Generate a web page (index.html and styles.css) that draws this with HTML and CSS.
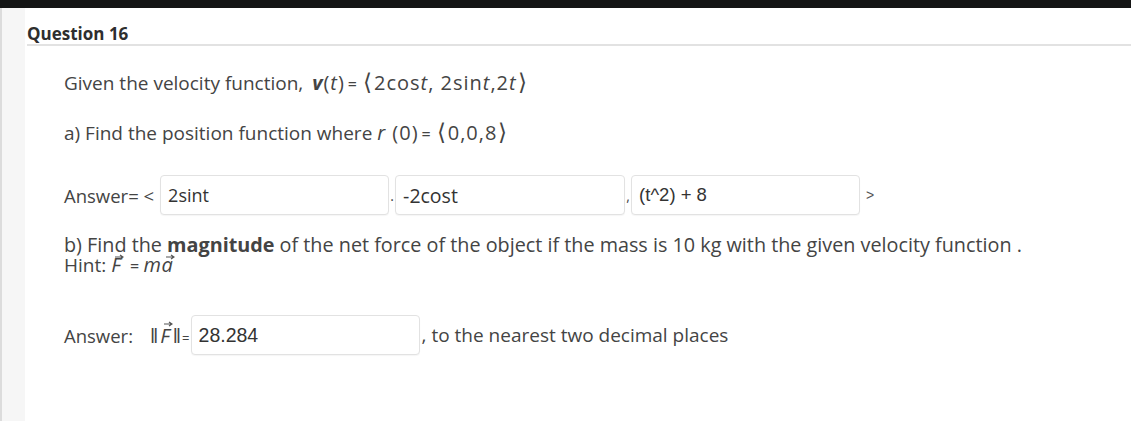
FILE: index.html
```html
<!DOCTYPE html>
<html>
<head>
<meta charset="utf-8">
<link rel="stylesheet" href="styles.css">
</head>
<body>
<div class="topbar"></div>
<div class="frame">
  <div class="strip"></div>
  <div class="main">
    <h2 class="qtitle">Question 16</h2>
    <div class="qbody">
      <p class="line l1">Given the velocity function, <span class="math m1"><b><i>v</i></b>(<i>t</i>)<span class="eq">=</span><span class="ang">⟨</span>2cos<i>t</i>, 2sin<i>t</i>,2<i>t</i><span class="ang">⟩</span></span></p>
      <p class="line l2">a) Find the position function where <span class="math"><i>r</i> (0)<span class="eq">=</span><span class="ang">⟨</span>0,0,8<span class="ang">⟩</span></span></p>
      <div class="row r1">
        <span class="lbl">Answer= &lt;</span>
        <input class="box b1 f-os" type="text" value="2sint">
        <span class="sep">.</span>
        <input class="box b2 f-os2" type="text" value="-2cost">
        <span class="sep">,</span>
        <input class="box b3 f-ar" type="text" value="(t^2) + 8">
        <span class="gt">&gt;</span>
      </div>
      <p class="line l3">b) Find the <b>magnitude</b> of the net force of the object if the mass is 10 kg with the given velocity function .</p>
      <p class="line l4">Hint: <span class="math m2"><span class="vec"><i>F</i><svg class="arr" viewBox="0 0 10 6"><path d="M1 3H8M6 1L9 3L6 5" fill="none" stroke="#555" stroke-width="1.2"/></svg></span> <span class="eq">=</span><i>m</i><span class="vec"><i>a</i><svg class="arr" viewBox="0 0 10 6"><path d="M1 3H8M6 1L9 3L6 5" fill="none" stroke="#555" stroke-width="1.2"/></svg></span></span></p>
      <div class="row r2">
        <span class="lbl lbl2">Answer:</span>
        <span class="norm">‖<span class="vec fv"><i>F</i><svg class="arr" viewBox="0 0 10 6"><path d="M1 3H8M6 1L9 3L6 5" fill="none" stroke="#555" stroke-width="1.2"/></svg></span>‖<span class="eqs">=</span></span>
        <input class="box b4 f-ar16" type="text" value="28.284">
        <span class="tail">, to the nearest two decimal places</span>
      </div>
    </div>
  </div>
</div>
</body>
</html>
```
FILE: styles.css
```css
html, body {
  margin: 0;
  padding: 0;
  background: #fff;
}
body {
  font-family: "Open Sans", "Liberation Sans", sans-serif;
  color: #444;
  width: 1131px;
  height: 421px;
  overflow: hidden;
}
.topbar {
  height: 8px;
  background: #141515;
}
.frame {
  display: flex;
  height: 413px;
}
.strip {
  width: 23px;
  flex: none;
  border-left: 2px solid #dcdcdc;
  background: #f6f6f6;
}
.main {
  flex: 1;
  padding-left: 2px;
}
.qtitle {
  margin: 15px 0 0 0;
  padding: 0;
  font-size: 17px;
  line-height: 21px;
  font-weight: 700;
  color: #2e2e2e;
  border-bottom: 2px solid #e2e2e2;
}
.qbody {
  padding-left: 37px;
}
.line {
  margin: 0;
  font-size: 19px;
  line-height: 24px;
  color: #444;
}
.l1 { margin-top: 25px; }
.l2 { margin-top: 25px; }
.l3 { margin-top: 20px; line-height: 20px; font-size: 19.8px; }
.l4 { line-height: 20px; }
.math {
  font-size: 20px;
  letter-spacing: 1px;
}
.m1 { margin-left: 4px; }
.m2 { letter-spacing: 0.5px; }
.ang {
  font-size: 23px;
  line-height: 20px;
  margin: 0 1px;
}
.eq { margin: 0 4px 0 3px; font-size: 16px; }
.math b { font-weight: 700; }
.vec {
  position: relative;
  display: inline-block;
}
.arr {
  position: absolute;
  left: 3px;
  top: -1px;
  width: 10px;
  height: 6px;
}
.row {
  display: flex;
  align-items: center;
  height: 40px;
}
.r1 { margin-top: 29px; }
.r2 { margin-top: 39px; }
.lbl {
  font-size: 18.5px;
  margin-right: 6px;
}
.lbl2 { margin-right: 17px; }
.box {
  box-sizing: border-box;
  height: 40px;
  border: 1px solid #e2e2e2;
  border-radius: 4px;
  background: #fff;
  padding: 0 7px;
  color: #333;
  outline: none;
  box-shadow: 0 1px 1px rgba(0,0,0,0.04);
}
.b1 { width: 229px; }
.b2 { width: 230px; }
.b3 { width: 229px; }
.b4 { width: 229px; }
.f-os { font-family: "Open Sans", sans-serif; font-size: 18px; }
.f-os2 { font-family: "Open Sans", sans-serif; font-size: 19.5px; }
.f-ar { font-family: "Liberation Sans", Arial, sans-serif; font-size: 18.5px; }
.f-ar16 { font-family: "Liberation Sans", Arial, sans-serif; font-size: 19.5px; }
.sep {
  width: 6px;
  text-align: center;
  font-size: 14px;
}
.gt {
  margin-left: 6px;
  font-family: "Liberation Sans", Arial, sans-serif;
  font-size: 14px;
  color: #555;
}
.norm {
  font-size: 20px;
  margin-right: 1px;
}
.fv { margin: 0 3px 0 2px; }
.eqs { font-size: 13px; margin-left: 1px; }
.tail {
  font-size: 19px;
  margin-left: 2px;
}
```
